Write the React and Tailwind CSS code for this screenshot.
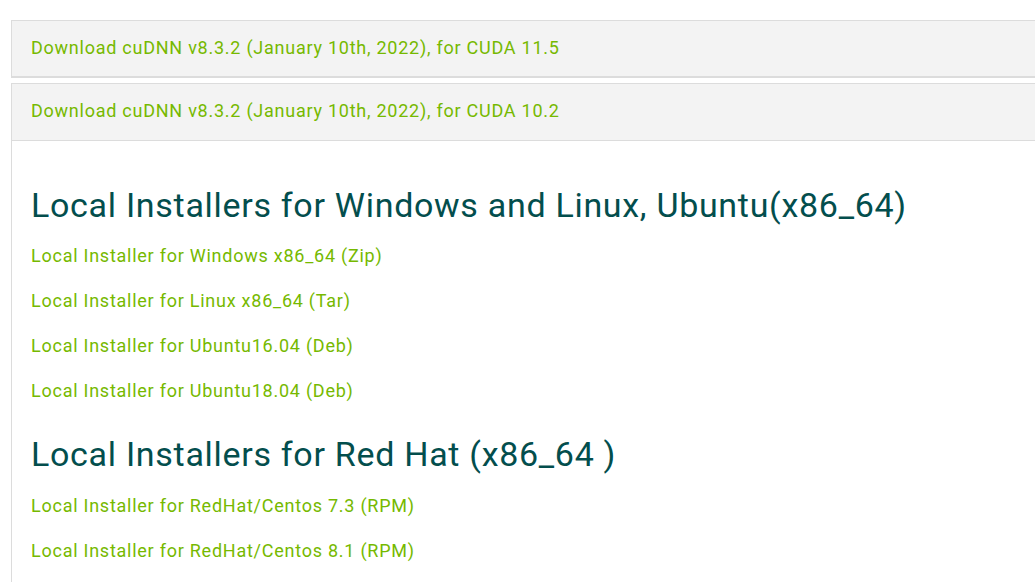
const links = [
  'Local Installer for Windows x86_64 (Zip)',
  'Local Installer for Linux x86_64 (Tar)',
  'Local Installer for Ubuntu16.04 (Deb)',
  'Local Installer for Ubuntu18.04 (Deb)',
];

const redhat = [
  'Local Installer for RedHat/Centos 7.3 (RPM)',
  'Local Installer for RedHat/Centos 8.1 (RPM)',
];

function Panel({ label, h }) {
  return (
    <div className={`${h} flex items-center px-[19px] pb-[3px] bg-[#f3f3f3]`}>
      <a className="text-[18px] tracking-[0.75px] text-[#76b900]">{label}</a>
    </div>
  );
}

export default function App() {
  return (
    <div className="w-[1035px] h-[582px] overflow-hidden bg-white pt-5 pl-[11px] font-['Roboto',sans-serif]">
      <div className="border border-[#dcdcdc] border-r-0 border-b-2">
        <Panel h="h-[55px]" label="Download cuDNN v8.3.2 (January 10th, 2022), for CUDA 11.5" />
      </div>
      <div className="mt-[5px] border-l border-t border-[#dcdcdc]">
        <div className="border-b border-[#dcdcdc]">
          <Panel h="h-[56px]" label="Download cuDNN v8.3.2 (January 10th, 2022), for CUDA 10.2" />
        </div>
        <div className="px-[19px] pt-[44px] h-[500px]">
          <h2 className="text-[34px] leading-[40px] tracking-[0.7px] text-[#034e4d]">
            Local Installers for Windows and Linux, Ubuntu(x86_64)
          </h2>
          <ul className="mt-[20px] flex flex-col gap-[23px]">
            {links.map((l) => (
              <li key={l} className="text-[18px] leading-[22px] tracking-[0.75px] text-[#76b900]">{l}</li>
            ))}
          </ul>
          <h2 className="mt-[32px] text-[34px] leading-[40px] tracking-[0.7px] text-[#034e4d]">
            Local Installers for Red Hat (x86_64 )
          </h2>
          <ul className="mt-[21px] flex flex-col gap-[23px]">
            {redhat.map((l) => (
              <li key={l} className="text-[18px] leading-[22px] tracking-[0.75px] text-[#76b900]">{l}</li>
            ))}
          </ul>
        </div>
      </div>
    </div>
  );
}
